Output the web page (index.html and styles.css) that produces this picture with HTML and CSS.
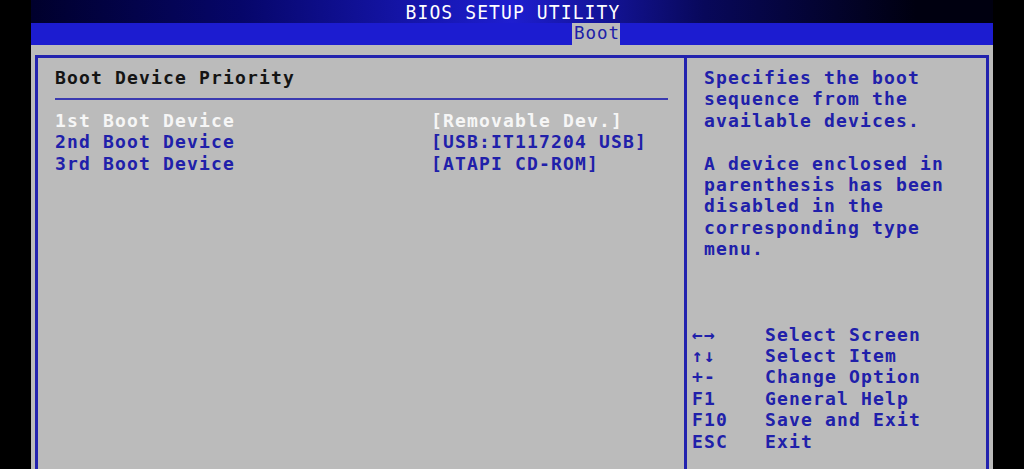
FILE: index.html
```html
<!DOCTYPE html>
<html>
<head>
<meta charset="utf-8">
<link rel="stylesheet" href="styles.css">
</head>
<body>
<div class="screen">
  <div class="titlebar"><span class="title">BIOS SETUP UTILITY</span></div>
  <div class="tabbar"><span class="tab">Boot</span></div>
  <div class="workarea">
    <div class="frame">
      <div class="main">
        <div class="row heading">Boot Device Priority</div>
        <div class="row rule"><span class="line"></span></div>
        <div class="row item selected"><span class="label">1st Boot Device</span><span class="value">[Removable Dev.]</span></div>
        <div class="row item"><span class="label">2nd Boot Device</span><span class="value">[USB:IT117204 USB]</span></div>
        <div class="row item"><span class="label">3rd Boot Device</span><span class="value">[ATAPI CD-ROM]</span></div>
      </div>
      <div class="side">
        <div class="help">
          <div class="row">Specifies the boot</div>
          <div class="row">sequence from the</div>
          <div class="row">available devices.</div>
        </div>
        <div class="help gap1">
          <div class="row">A device enclosed in</div>
          <div class="row">parenthesis has been</div>
          <div class="row">disabled in the</div>
          <div class="row">corresponding type</div>
          <div class="row">menu.</div>
        </div>
        <div class="legend">
          <div class="row"><span class="key">&#8592;&#8594;</span><span class="desc">Select Screen</span></div>
          <div class="row"><span class="key">&#8593;&#8595;</span><span class="desc">Select Item</span></div>
          <div class="row"><span class="key">+-</span><span class="desc">Change Option</span></div>
          <div class="row"><span class="key">F1</span><span class="desc">General Help</span></div>
          <div class="row"><span class="key">F10</span><span class="desc">Save and Exit</span></div>
          <div class="row"><span class="key">ESC</span><span class="desc">Exit</span></div>
        </div>
      </div>
    </div>
  </div>
</div>
</body>
</html>
```

FILE: styles.css
```css
html, body {
  margin: 0;
  padding: 0;
  background: #000;
  height: 100%;
  overflow: hidden;
}

.screen {
  margin-left: 31px;
  width: 962px;
  height: 469px;
  display: flex;
  flex-direction: column;
  overflow: hidden;
  font-family: "DejaVu Sans Mono", "Liberation Mono", monospace;
}

.titlebar {
  height: 23px;
  display: flex;
  justify-content: center;
  align-items: center;
  background: linear-gradient(to right, #00002c 0%, #06066a 22%, #1e1ed0 50%, #08085a 70%, #000010 92%, #000010 100%);
}

.title {
  color: #fff;
  font-size: 18px;
  letter-spacing: 1.1px;
  line-height: 21px;
  display: inline-block;
  transform: scaleY(1.12);
  margin-left: 2px;
}

.tabbar {
  height: 22px;
  background: #1c1cd0;
  padding-left: 541px;
  display: flex;
}

.tab {
  background: #bbbbbb;
  color: #2020a8;
  font-size: 17.5px;
  letter-spacing: 1px;
  line-height: 21px;
  padding: 0 0 0 2px;
  display: inline-block;
}

.workarea {
  flex: 1;
  background: #bbbbbb;
  padding: 10px 4px 0;
  display: flex;
}

.frame {
  flex: 1;
  border: 3px solid #2222ae;
  border-bottom: none;
  display: grid;
  grid-template-columns: 649px 1fr;
}

.row {
  height: 21.4px;
  line-height: 21.4px;
  font-size: 18px;
  letter-spacing: 1.16px;
  font-weight: bold;
  white-space: pre;
}

.main {
  border-right: 3px solid #2222ae;
  padding: 9px 16px 0 17px;
  color: #2020aa;
}

.heading {
  color: #141414;
}

.rule {
  display: flex;
  align-items: center;
}

.line {
  display: block;
  flex: 1;
  height: 2px;
  background: #3a3ab0;
}

.item {
  display: grid;
  grid-template-columns: 376px 1fr;
}

.selected {
  color: #f6f6f6;
}

.side {
  padding: 9px 0 0 5px;
  color: #2020aa;
}

.help {
  padding-left: 12px;
}

.gap1 {
  margin-top: 21.4px;
}

.legend {
  margin-top: 64.2px;
}

.legend .row {
  display: grid;
  grid-template-columns: 73px 1fr;
}
```
